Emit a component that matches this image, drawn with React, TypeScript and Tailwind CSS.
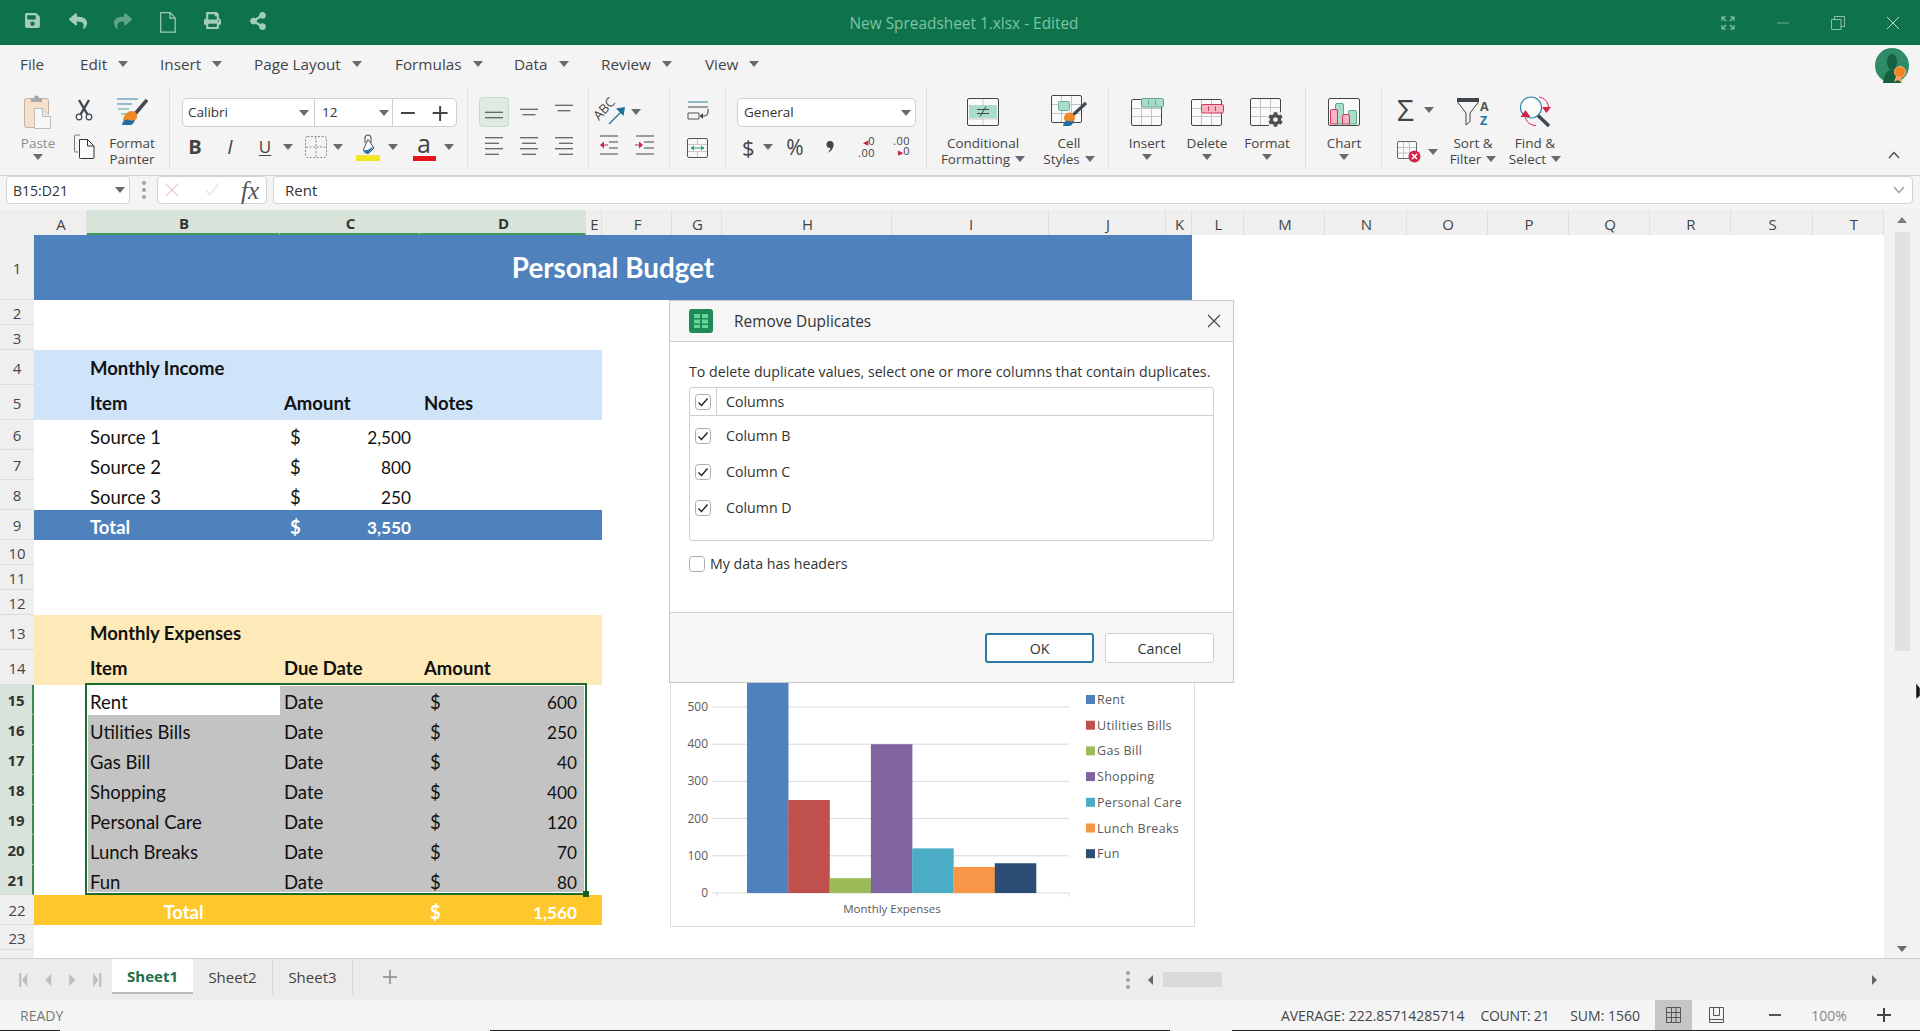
import type { ReactNode } from "react";
import { FaCog, FaPrint, FaReply, FaSave, FaShare, FaShareAlt } from "react-icons/fa";

const Caret = ({ className = "" }: { className?: string }) => (
  <svg width="10" height="6" viewBox="0 0 10 6" className={`shrink-0 ${className}`}>
    <path d="M0 0h10L5 6z" fill="#666b70" />
  </svg>
);

const GridLines = ({ d }: { d: string }) => <path d={d} stroke="#c4c4c4" strokeWidth="1" fill="none" />;

const Lines = ({ widths, align = "left", y = 0 }: { widths: number[]; align?: string; y?: number }) => (
  <svg width="20" height="20" viewBox="0 0 20 20" style={{ transform: `translateY(${y}px)` }}>
    {widths.map((w, i) => {
      const x = align === "left" ? 1 : align === "right" ? 19 - w : 10 - w / 2;
      const top = (20 - (widths.length - 1) * (widths.length === 3 ? 6 : 5.5)) / 2;
      return <path key={i} d={`M${x} ${top + i * (widths.length === 3 ? 6 : 5.5)}h${w}`} stroke="#4a4a4a" strokeWidth="1.1" />;
    })}
  </svg>
);

const PasteIcon = () => (
  <svg width="28" height="35" viewBox="0 0 28 35">
    <rect x="0.5" y="4.5" width="24" height="29" rx="2" fill="#f6e0cb" stroke="#c2b1a3" />
    <path d="M7 8V4h3a2.5 2.5 0 0 1 5 0h3v4z" fill="#a8a8a8" />
    <path d="M10.5 14.5h8l8 8v12h-16z" fill="#f7f7f7" stroke="#bdbdbd" />
    <path d="M18.5 14.5v8h8" fill="#e6e6e6" stroke="#bdbdbd" />
  </svg>
);

const ScissorsIcon = () => (
  <svg width="18" height="22" viewBox="0 0 18 22">
    <circle cx="4" cy="18" r="2.8" fill="none" stroke="#3e474d" strokeWidth="1.2" />
    <circle cx="14" cy="18" r="2.8" fill="none" stroke="#3e474d" strokeWidth="1.2" />
    <path d="M5.5 15.5 14 1M12.5 15.5 4 1" stroke="#3e474d" strokeWidth="2.4" />
  </svg>
);

const CopyIcon = () => (
  <svg width="22" height="25" viewBox="0 0 22 25">
    <path d="M7 1H2.5a1 1 0 0 0-1 1v15a1 1 0 0 0 1 1H5" fill="none" stroke="#777" />
    <path d="M6.5 5.5h8l6.5 6.5v11.5a1 1 0 0 1-1 1H7.5a1 1 0 0 1-1-1z" fill="#fafafa" stroke="#333" />
    <path d="M14.5 5.5V12H21" fill="none" stroke="#333" />
  </svg>
);

const PainterIcon = () => (
  <svg width="31" height="28" viewBox="0 0 31 28">
    <path d="M0 1h21" stroke="#4b96b6" strokeWidth="1.2" />
    <path d="M0 6h15" stroke="#4b96b6" strokeWidth="1.2" />
    <path d="M1 11h11" stroke="#63b5a2" strokeWidth="1.2" />
    <path d="M4 16h6" stroke="#63b5a2" strokeWidth="1.2" />
    <path d="M18 16 30 2" stroke="#414a50" strokeWidth="3.5" />
    <path d="M9 15.5c4-4 10-3 11 1.5.7 3-1 5-3 6H6c0-3 1-5 3-7.5z" fill="#ef8a27" />
    <path d="M5 27c.5-4 3-6 7-5 2 .5 4 1 6 0-1 3-3 5-5 5z" fill="#1f6ea6" />
  </svg>
);

const BordersIcon = () => (
  <svg width="22" height="22" viewBox="0 0 22 22">
    <rect x="0.5" y="0.5" width="21" height="21" rx="2" fill="none" stroke="#8a8a8a" strokeDasharray="2 1.5" />
    <path d="M11 1v20M1 11h20" stroke="#8a8a8a" strokeDasharray="2 1.5" />
  </svg>
);

const FillIcon = () => (
  <svg width="24" height="27" viewBox="0 0 24 27">
    <path d="M9 9V4a3 3 0 0 1 6 0v5" fill="none" stroke="#555" strokeWidth="1.1" />
    <path d="M12 5.5 18 14l-5 5-1 .5c-2.5 0-4.5-1.5-4.5-4z" fill="#fff" stroke="#555" />
    <path d="M8 16c2 .5 5 0 8-3l1 1-4.5 5c-2.5.7-4.5-.5-4.5-3z" fill="#1f78ab" />
    <rect x="0" y="21.5" width="24" height="5.5" fill="#f6e71c" stroke="#e2d43a" strokeWidth="0.5" />
  </svg>
);

const TextColorIcon = () => (
  <div className="flex w-[24px] flex-col items-center">
    <span className="text-[25px] leading-[21px] text-[#444]">a</span>
    <span className="mt-[2px] h-[5px] w-[23px] bg-[#e8141c]" />
  </div>
);

const AbcIcon = () => (
  <svg width="28" height="26" viewBox="0 0 28 26" className="overflow-visible">
    <text x="1" y="22" transform="rotate(-47 1 22)" fontFamily="Open Sans, sans-serif" fontSize="13" fill="#444">ABC</text>
    <path d="M11 25 24 12" stroke="#1f6f96" strokeWidth="1.2" />
    <path d="M18 9.5l9-1.500-1.500 9z" fill="#1f6f96" />
  </svg>
);

const IndentIcon = ({ flip = false }: { flip?: boolean }) => (
  <svg width="20" height="20" viewBox="0 0 20 20">
    {flip ? (
      <>
        <path d="M1 1h18M1 19h18M9 7h10M9 13h10" stroke="#444" strokeWidth="1.1" />
        <path d="M0 9.4h4V6.5l4 3.5-4 3.5v-2.9H0z" fill="#c5264d" />
      </>
    ) : (
      <>
        <path d="M1 1h18M1 19h18M10 7h9M10 13h9" stroke="#444" strokeWidth="1.1" />
        <path d="M9 9.4H5V6.5L1 10l4 3.5v-2.9h4z" fill="#c5264d" />
      </>
    )}
  </svg>
);

const WrapIcon = () => (
  <svg width="22" height="20" viewBox="0 0 22 20">
    <path d="M1 1h20" stroke="#4f8fb0" strokeWidth="1.2" />
    <path d="M1 6h20" stroke="#555" strokeWidth="1.1" />
    <path d="M1 12h11v6H1z" fill="none" stroke="#555" strokeWidth="1" />
    <path d="M21 8v3a4 4 0 0 1-4 4h-2" fill="none" stroke="#444" strokeWidth="1.1" />
    <path d="M16 12l-3.5 3 3.5 3z" fill="#444" />
  </svg>
);

const MergeIcon = () => (
  <svg width="21" height="20" viewBox="0 0 21 20">
    <rect x="0.5" y="0.5" width="20" height="19" rx="1.5" fill="#f8f8f8" stroke="#555" />
    <path d="M1 6.5h19M1 13.5h19M10.5 1v5.5M10.5 13.5V19" stroke="#c8c8c8" />
    <path d="M4 10h13" stroke="#35a27a" strokeWidth="1.1" />
    <path d="M7 7.5 3.5 10 7 12.5zM14 7.5l3.5 2.5-3.5 2.5z" fill="#35a27a" />
  </svg>
);

const CommaIcon = () => (
  <svg width="8" height="12" viewBox="0 0 8 12">
    <circle cx="4" cy="3.5" r="3.5" fill="#444" />
    <path d="M7.5 3.5c0 4-2.5 7-6 8.500 2-2 3-4 3-6z" fill="#444" />
  </svg>
);

const CfIcon = () => (
  <svg width="32" height="28" viewBox="0 0 32 28">
    <rect x="0.5" y="0.5" width="31" height="27" rx="1.5" fill="#fafafa" stroke="#444" />
    <path d="M16 1v26M1 21h30" stroke="#c8c8c8" />
    <rect x="2" y="7" width="28" height="13" fill="#a9dccb" />
    <path d="M10 11.5h12M10 15.5h12M19 8.5l-6 10" stroke="#444" strokeWidth="1" />
  </svg>
);

const CellStylesIcon = () => (
  <svg width="36" height="32" viewBox="0 0 36 32">
    <rect x="0.5" y="0.5" width="30" height="27" rx="1.5" fill="#fafafa" stroke="#444" />
    <GridLines d="M10.5 1v26M20.5 1v26M1 9.5h29M1 18.5h29" />
    <rect x="7.5" y="6.5" width="11" height="9" rx="1" fill="#a9dccb" stroke="#69b59c" />
    <path d="M22 20 35 8" stroke="#414a50" strokeWidth="3.2" />
    <circle cx="18.5" cy="23" r="5.5" fill="#ef8a27" />
    <path d="M12 31c.5-4 3-6 6-5 2 .5 3 .5 5 0-1 3-3 5-5 5z" fill="#1f6ea6" />
  </svg>
);

const InsertDeleteIcon = ({ kind }: { kind: "insert" | "delete" }) => {
  const top = kind === "insert" ? 0.5 : 6.5;
  const fill = kind === "insert" ? "#a9dccb" : "#f8b4c3";
  const stroke = kind === "insert" ? "#5fa98c" : "#c83a58";
  return (
    <svg width="33" height="28" viewBox="0 0 33 28">
      <rect x="0.5" y="1.5" width="30" height="26" rx="1.5" fill="#fafafa" stroke="#444" />
      <GridLines d="M10.5 2v25M20.5 2v25M1 10.5h29M1 18.5h29" />
      <rect x="10.5" y={top} width="22" height="8.5" rx="1.5" fill={fill} stroke={stroke} />
      <path d={`M17.5 ${top + 2}v4.5M24.5 ${top + 2}v4.5`} stroke={stroke} />
    </svg>
  );
};

const FormatIcon = () => (
  <svg width="34" height="29" viewBox="0 0 34 29">
    <rect x="0.5" y="0.5" width="30" height="27" rx="1.5" fill="#fafafa" stroke="#444" />
    <GridLines d="M10.5 1v26M20.5 1v26M1 9.5h29M1 18.5h29" />
    <circle cx="25.5" cy="21.5" r="9" fill="#f3f3f3" />
    <FaCog x="18" y="14" size="15" color="#4b4f53" />
  </svg>
);

const ChartIcon = () => (
  <svg width="32" height="28" viewBox="0 0 32 28">
    <rect x="0.5" y="0.5" width="31" height="27" rx="1.5" fill="#fafafa" stroke="#444" />
    <path d="M7.5 26V7A1.5 1.5 0 0 1 9 5.5h5A1.5 1.5 0 0 1 15.5 7v19z" fill="#a9dccb" stroke="#5fa98c" />
    <path d="M20.5 26V14a1.5 1.5 0 0 1 1.5-1.5h5a1.5 1.5 0 0 1 1.5 1.5v12z" fill="#a9dccb" stroke="#5fa98c" />
    <path d="M2.5 26V13A1.5 1.5 0 0 1 4 11.5h4A1.5 1.5 0 0 1 9.5 13v13z" fill="#f8b4c3" stroke="#c83a58" />
    <path d="M14.5 26v-8a1.5 1.5 0 0 1 1.5-1.5h4a1.5 1.5 0 0 1 1.5 1.5v8z" fill="#f8b4c3" stroke="#c83a58" />
  </svg>
);

const ClearIcon = () => (
  <svg width="24" height="22" viewBox="0 0 24 22">
    <rect x="0.5" y="0.5" width="19" height="17" rx="1.5" fill="#fafafa" stroke="#666" />
    <GridLines d="M6.5 1v16M12.5 1v16M1 6.5h18M1 12h18" />
    <circle cx="17.5" cy="15.5" r="6" fill="#d5244c" />
    <path d="M15 13l5 5M20 13l-5 5" stroke="#fff" strokeWidth="1.6" />
  </svg>
);

const SortIcon = () => (
  <svg width="33" height="28" viewBox="0 0 33 28" className="overflow-visible">
    <rect x="0" y="0" width="22" height="4" fill="#3f464b" />
    <path d="M.5 4 9 15v12l4-3.5V15l8.500-11" fill="none" stroke="#444" />
    <text x="23" y="13" fontFamily="Open Sans, sans-serif" fontWeight="700" fontSize="12.5" fill="#555">A</text>
    <text x="23" y="27" fontFamily="Open Sans, sans-serif" fontWeight="700" fontSize="12.5" fill="#1c77a5">Z</text>
  </svg>
);

const FindIcon = () => (
  <svg width="34" height="32" viewBox="0 0 34 32">
    <circle cx="13" cy="11.5" r="10.5" fill="#fbfbfb" stroke="#2f7fa5" strokeWidth="1.1" />
    <path d="M20 19.5 31 30" stroke="#3d4a52" strokeWidth="3.5" />
    <path d="M21 1c5 1 9 4 9.5 10" fill="none" stroke="#d5244c" />
    <path d="M24 11h9l-4.5 6z" fill="#d5244c" />
    <path d="M7 20c.5 5 5 9.5 11 9.5" fill="none" stroke="#d5244c" />
    <path d="M2.5 21 7.5 14l5 7z" fill="#d5244c" />
  </svg>
);

const Avatar = () => (
  <svg width="34" height="35" viewBox="0 0 34 35">
    <ellipse cx="17" cy="17.5" rx="17" ry="17.5" fill="#2f8a66" />
    <ellipse cx="17" cy="14" rx="5" ry="8" fill="#14603f" />
    <path d="M8 35c1-10 5-13 9-13s8 3 9 13z" fill="#14603f" />
    <path d="M21 28l-2 6 4-2 4 3-1-7z" fill="#f5a35c" />
    <circle cx="25" cy="24" r="5.5" fill="#f0851e" stroke="#f7b27a" />
  </svg>
);

const FileIcon = () => (
  <svg width="16" height="21" viewBox="0 0 16 21">
    <path d="M.7.7h9.5l5 5.5v14H.7z" fill="none" stroke="#a2cdb9" strokeWidth="1.2" />
    <path d="M10 .7v5.5h5.2" fill="none" stroke="#a2cdb9" strokeWidth="1.2" />
  </svg>
);

const Grip = () => (
  <svg width="4" height="18" viewBox="0 0 4 18">
    <circle cx="2" cy="2" r="2" fill="#a0a0a0" />
    <circle cx="2" cy="9" r="2" fill="#a0a0a0" />
    <circle cx="2" cy="16" r="2" fill="#a0a0a0" />
  </svg>
);

const TitleBar = () => (
  <div className="grid h-[45px] shrink-0 grid-cols-[1fr_auto_1fr] items-center bg-[#0e734b]">
    <div className="flex pl-[10px]">
      <span className="flex w-[45px] justify-center"><FaSave size={17} color="#a2cdb9" /></span>
      <span className="flex w-[45px] justify-center"><FaReply size={18} color="#a2cdb9" /></span>
      <span className="flex w-[45px] justify-center"><FaShare size={18} color="#5fa486" /></span>
      <span className="flex w-[45px] justify-center"><FileIcon /></span>
      <span className="flex w-[45px] justify-center"><FaPrint size={17} color="#a2cdb9" /></span>
      <span className="flex w-[45px] justify-center"><FaShareAlt size={18} color="#a2cdb9" /></span>
    </div>
    <div className="pl-[8px] pt-[3px] text-[15.4px] text-[#7dc3a3]">New Spreadsheet 1.xlsx - Edited</div>
    <div className="flex justify-end">
      <span className="flex w-[55px] justify-center">
        <svg width="14" height="14" viewBox="0 0 14 14" fill="none" stroke="#8dc2a9" strokeWidth="1.1">
          <path d="M1 5V1h4M1 1l4 4M13 5V1H9M13 1 9 5M1 9v4h4M1 13l4-4M13 9v4H9M13 13 9 9" />
        </svg>
      </span>
      <span className="flex w-[55px] justify-center">
        <svg width="14" height="14" viewBox="0 0 14 14"><path d="M1 7h12" stroke="#6cae90" /></svg>
      </span>
      <span className="flex w-[55px] justify-center">
        <svg width="14" height="14" viewBox="0 0 14 14" fill="none" stroke="#8dc2a9">
          <path d="M.5 3.5h9.5v10H.5zM3.5 3.5V.5h10v10H10" />
        </svg>
      </span>
      <span className="flex w-[55px] justify-center">
        <svg width="14" height="14" viewBox="0 0 14 14"><path d="M1 1l12 12M13 1 1 13" stroke="#bcdccc" strokeWidth="1" /></svg>
      </span>
    </div>
  </div>
);

const menus = [
  { label: "File", w: "w-[60px]", caret: false },
  { label: "Edit", w: "w-[80px]", caret: true },
  { label: "Insert", w: "w-[94px]", caret: true },
  { label: "Page Layout", w: "w-[141px]", caret: true },
  { label: "Formulas", w: "w-[119px]", caret: true },
  { label: "Data", w: "w-[87px]", caret: true },
  { label: "Review", w: "w-[104px]", caret: true },
  { label: "View", w: "w-[90px]", caret: true },
];

const MenuBar = () => (
  <div className="flex h-[40px] shrink-0 items-center justify-between bg-[#f4f4f4] pl-[20px] pr-[11px] text-[15.3px] text-[#444]">
    <div className="flex pb-[2px]">
      {menus.map((m) => (
        <div key={m.label} className={`flex items-center gap-[11px] ${m.w}`}>
          <span>{m.label}</span>
          {m.caret && <Caret />}
        </div>
      ))}
    </div>
    <Avatar />
  </div>
);

const Group = ({ w, children }: { w: string; children: ReactNode }) => (
  <div className={`relative h-full shrink-0 ${w}`}>
    {children}
    <div className="absolute bottom-[7px] right-0 top-[3px] w-px bg-[#e2e2e2]" />
  </div>
);

const Big = ({ w, icon, top = "h-[41px]", gap = "mt-[9px]", lines, caret = "below", muted }: { w: string; icon: ReactNode; top?: string; gap?: string; lines: string[]; caret?: "below" | "inline" | "none"; muted?: boolean }) => (
  <div className={`flex shrink-0 flex-col items-center ${w}`}>
    <div className={`flex items-end justify-center ${top}`}>{icon}</div>
    <div className={`flex flex-col items-center text-[13.5px] leading-[16px] ${gap} ${muted ? "text-[#8e8e8e]" : "text-[#444]"}`}>
      {lines.map((l, i) => (
        <div key={l} className="flex items-center gap-[5px] whitespace-nowrap">
          {l}
          {caret === "inline" && i === lines.length - 1 && <Caret />}
        </div>
      ))}
      {caret === "below" && <Caret className="mt-[3px]" />}
    </div>
  </div>
);

const Ribbon = () => (
  <div className="relative flex h-[91px] shrink-0 border-b border-[#d2d2d2] bg-[#f4f4f4]">
    <Group w="w-[170px]">
      <div className="flex pl-[2px]">
        <Big w="w-[72px]" icon={<PasteIcon />} top="h-[44px]" gap="mt-[6px]" lines={["Paste"]} muted />
        <div className="flex w-[20px] flex-col items-center pt-[14px]">
          <ScissorsIcon />
          <div className="mt-[13px]"><CopyIcon /></div>
        </div>
        <Big w="w-[76px]" icon={<PainterIcon />} lines={["Format", "Painter"]} caret="none" />
      </div>
    </Group>

    <Group w="w-[298px]">
      <div className="pl-[12px] pt-[13px]">
        <div className="flex h-[29px] w-[275px] items-center rounded-[5px] border border-[#cfcfcf] bg-white text-[13.5px] text-[#333]">
          <div className="flex h-full w-[133px] items-center justify-between border-r border-[#cfcfcf] pl-[5px] pr-[5px]">
            Calibri <Caret />
          </div>
          <div className="flex h-full w-[78px] items-center justify-between border-r border-[#cfcfcf] pl-[7px] pr-[3px]">
            12 <Caret />
          </div>
          <svg width="64" height="18" viewBox="0 0 64 18" stroke="#444" strokeWidth="2">
            <path d="M8 9h14M40 9h15M47.5 2v15" />
          </svg>
        </div>
        <div className="mt-[7px] flex h-[26px] items-center text-[#444]">
          <span className="ml-[6px] w-[14px] text-center text-[20px] font-bold">B</span>
          <span className="ml-[21px] w-[14px] text-center text-[20px] italic">I</span>
          <span className="ml-[21px] w-[14px] text-center text-[17px] underline underline-offset-[2px]">U</span>
          <Caret className="ml-[11px]" />
          <span className="ml-[12px]"><BordersIcon /></span>
          <Caret className="ml-[6px]" />
          <span className="ml-[13px]"><FillIcon /></span>
          <Caret className="ml-[8px]" />
          <span className="ml-[14px]"><TextColorIcon /></span>
          <Caret className="ml-[8px]" />
        </div>
      </div>
    </Group>

    <Group w="w-[121px]">
      <div className="grid grid-cols-[repeat(3,35px)] grid-rows-[30px_38px] justify-items-center pl-[8px] pt-[12px]">
        <div className="flex h-[30px] w-[30px] items-center justify-center rounded-[4px] border border-[#c8dacf] bg-[#dfeae3]">
          <Lines widths={[18, 18]} align="left" y={3} />
        </div>
        <div className="flex h-[30px] items-center"><Lines widths={[18, 13]} align="center" y={0} /></div>
        <div className="flex h-[30px] items-center"><Lines widths={[18, 13]} align="center" y={-4} /></div>
        <div className="flex items-center"><Lines widths={[18, 14, 18, 14]} /></div>
        <div className="flex items-center"><Lines widths={[18, 14, 18, 14]} align="center" /></div>
        <div className="flex items-center"><Lines widths={[18, 14, 18, 14]} align="right" /></div>
      </div>
    </Group>

    <Group w="w-[81px]">
      <div className="flex items-center pl-[9px] pt-[14px]">
        <AbcIcon />
        <Caret className="ml-[5px]" />
      </div>
      <div className="mt-[10px] flex items-center pl-[10px]">
        <IndentIcon />
        <span className="ml-[16px]"><IndentIcon flip /></span>
      </div>
    </Group>

    <Group w="w-[56px]">
      <div className="flex flex-col items-center pr-px pt-[16px]">
        <WrapIcon />
        <div className="mt-[17px]"><MergeIcon /></div>
      </div>
    </Group>

    <Group w="w-[201px]">
      <div className="pl-[11px] pt-[13px]">
        <div className="flex h-[29px] w-[179px] items-center justify-between rounded-[5px] border border-[#cfcfcf] bg-white pl-[6px] pr-[4px] text-[13.5px] text-[#333]">
          General <Caret />
        </div>
        <div className="mt-[6px] flex h-[28px] items-center text-[#444]">
          <span className="ml-[5px] w-[12px] text-center text-[22px] leading-none">$</span>
          <Caret className="ml-[9px]" />
          <span className="ml-[12px] w-[20px] text-center text-[21px] leading-none">%</span>
          <span className="ml-[21px]"><CommaIcon /></span>
          <div className="ml-[21px] flex w-[20px] flex-col items-end text-[11px] leading-[10px] tracking-[0.5px]">
            <span><span className="text-[7px] text-[#c5264d]">◀</span>0</span>
            <span>.00</span>
          </div>
          <div className="ml-[15px] flex w-[20px] flex-col items-end text-[11px] leading-[10px] tracking-[0.5px]">
            <span>.00</span>
            <span><span className="text-[7px] text-[#c5264d]">▶</span>0</span>
          </div>
        </div>
      </div>
    </Group>

    <Group w="w-[182px]">
      <div className="flex">
        <Big w="w-[112px]" icon={<CfIcon />} lines={["Conditional", "Formatting"]} caret="inline" />
        <Big w="w-[60px]" icon={<CellStylesIcon />} top="h-[42px]" gap="mt-[8px]" lines={["Cell", "Styles"]} caret="inline" />
      </div>
    </Group>

    <Group w="w-[197px]">
      <div className="flex pl-[8px]">
        <Big w="w-[60px]" icon={<InsertDeleteIcon kind="insert" />} lines={["Insert"]} />
        <Big w="w-[60px]" icon={<InsertDeleteIcon kind="delete" />} lines={["Delete"]} />
        <Big w="w-[60px]" icon={<FormatIcon />} top="h-[42px]" gap="mt-[8px]" lines={["Format"]} />
      </div>
    </Group>

    <Group w="w-[76px]">
      <Big w="w-[76px]" icon={<ChartIcon />} lines={["Chart"]} />
    </Group>

    <div className="flex flex-1">
      <div className="flex w-[63px] shrink-0 flex-col pl-[15px]">
        <div className="flex items-center pt-[8px] text-[30px] leading-[34px] text-[#444]">
          Σ<Caret className="ml-[10px]" />
        </div>
        <div className="mt-[14px] flex items-center">
          <ClearIcon />
          <Caret className="ml-[7px]" />
        </div>
      </div>
      <Big w="w-[56px]" icon={<SortIcon />} lines={["Sort &", "Filter"]} caret="inline" />
      <Big w="w-[68px]" icon={<FindIcon />} top="h-[43px]" gap="mt-[7px]" lines={["Find &", "Select"]} caret="inline" />
      <div className="ml-auto flex items-end pb-[16px] pr-[20px]">
        <svg width="12" height="8" viewBox="0 0 12 8" fill="none" stroke="#444" strokeWidth="1.2"><path d="M1 7l5-5.5L11 7" /></svg>
      </div>
    </div>
  </div>
);

const FormulaBar = () => (
  <div className="flex h-[34px] shrink-0 bg-[#f4f4f4] pl-[6px] pr-[7px]">
    <div className="flex h-[28px] w-[124px] items-center justify-between rounded-[4px] border border-[#d2d2d2] bg-white pl-[6px] pr-[4px] text-[14px] text-[#333]">
      B15:D21 <Caret />
    </div>
    <div className="flex h-[28px] w-[27px] items-center justify-center"><Grip /></div>
    <div className="flex h-[28px] w-[110px] items-center rounded-[4px] border border-[#d2d2d2] bg-white">
      <svg width="14" height="14" viewBox="0 0 14 14" className="ml-[7px]"><path d="M1 1l12 12M13 1 1 13" stroke="#f0cbd2" strokeWidth="1.4" /></svg>
      <svg width="14" height="14" viewBox="0 0 14 14" className="ml-[26px]"><path d="M1 7l4 5L13 1" fill="none" stroke="#d7ece3" strokeWidth="1.4" /></svg>
      <span className="ml-[22px] font-['Liberation_Serif',serif] text-[25px] italic leading-none text-[#555]">fx</span>
    </div>
    <div className="ml-[6px] flex h-[28px] flex-1 items-center justify-between rounded-[4px] border border-[#d2d2d2] bg-white pl-[11px] pr-[7px] text-[15px] text-[#333]">
      Rent
      <svg width="12" height="8" viewBox="0 0 12 8" fill="none" stroke="#999" strokeWidth="1.2"><path d="M1 1l5 5.5L11 1" /></svg>
    </div>
  </div>
);

const columns = [
  { l: "A", w: "w-[53px]" },
  { l: "B", w: "w-[193px]", s: true },
  { l: "C", w: "w-[140px]", s: true },
  { l: "D", w: "w-[166px]", s: true },
  { l: "E", w: "w-[16px]" },
  { l: "F", w: "w-[70px]" },
  { l: "G", w: "w-[50px]" },
  { l: "H", w: "w-[170px]" },
  { l: "I", w: "w-[157px]" },
  { l: "J", w: "w-[117px]" },
  { l: "K", w: "w-[26px]" },
  { l: "L", w: "w-[52px]" },
  { l: "M", w: "w-[81px]" },
  { l: "N", w: "w-[82px]" },
  { l: "O", w: "w-[81px]" },
  { l: "P", w: "w-[81px]" },
  { l: "Q", w: "w-[81px]" },
  { l: "R", w: "w-[81px]" },
  { l: "S", w: "w-[82px]" },
  { l: "T", w: "w-[71px] pl-[12px]" },
];

const ColumnHeader = () => (
  <div className="flex h-[25px] shrink-0 bg-[#efefef] pl-[34px] text-[15px] text-[#444]">
    {columns.map((c) => (
      <div
        key={c.l}
        className={`flex items-center justify-center border-r border-[#dfdfdf] pl-[2px] pt-[3px] ${c.w} ${
          c.s ? "border-b-2 border-b-[#3e9a5c] bg-[#d8e4da] font-bold text-[#333]" : ""
        }`}
      >
        {c.l}
      </div>
    ))}
  </div>
);

const RowHead = ({ n, h, sel }: { n: number; h: string; sel?: boolean }) => (
  <div
    className={`flex w-[34px] shrink-0 items-center justify-center border-b border-[#dcdcdc] pt-[2px] text-[15px] ${h} ${
      sel ? "border-r-2 border-r-[#3e8a55] bg-[#d8e4da] font-bold text-[#333]" : "bg-[#efefef] text-[#444]"
    }`}
  >
    {n}
  </div>
);

const Money = ({ w, v }: { w: string; v: string }) => (
  <div className={`flex items-baseline justify-between pl-[10px] pr-[9px] ${w}`}>
    <span>$</span>
    <span className="text-[17.2px]">{v}</span>
  </div>
);

const Row = ({ n, h, sel, band = "", children }: { n: number; h: string; sel?: boolean; band?: string; children?: ReactNode }) => (
  <div className={`flex shrink-0 ${h}`}>
    <RowHead n={n} h={h} sel={sel} />
    <div className={`flex w-[568px] items-center font-['Lato',sans-serif] text-[18.5px] text-[#111] ${band}`}>
      <div className="w-[53px] shrink-0" />
      {children}
    </div>
  </div>
);

const expenses = [
  { item: "Rent", amt: "600" },
  { item: "Utilities Bills", amt: "250" },
  { item: "Gas Bill", amt: "40" },
  { item: "Shopping", amt: "400" },
  { item: "Personal Care", amt: "120" },
  { item: "Lunch Breaks", amt: "70" },
  { item: "Fun", amt: "80" },
];

const income = [
  { item: "Source 1", amt: "2,500" },
  { item: "Source 2", amt: "800" },
  { item: "Source 3", amt: "250" },
];

const Sheet = () => (
  <div className="relative flex-1 overflow-hidden bg-white">
    <div className="flex h-[65px]">
      <RowHead n={1} h="h-[65px]" />
      <div className="flex w-[1158px] items-center justify-center bg-[#4f81bd] font-['Lato',sans-serif] text-[27.8px] font-bold text-white">
        Personal Budget
      </div>
    </div>
    <Row n={2} h="h-[25px]" />
    <Row n={3} h="h-[25px]" />
    <Row n={4} h="h-[35px]" band="bg-[#cfe3f9] pt-[2px] font-bold">
      <div className="pl-[3px]">Monthly Income</div>
    </Row>
    <Row n={5} h="h-[35px]" band="bg-[#cfe3f9] pt-[2px] font-bold">
      <div className="w-[193px] pl-[3px]">Item</div>
      <div className="w-[140px] pl-[4px]">Amount</div>
      <div className="pl-[4px]">Notes</div>
    </Row>
    {income.map((r, i) => (
      <Row key={r.item} n={6 + i} h="h-[30px]" band="pt-[5px]">
        <div className="w-[193px] pl-[3px]">{r.item}</div>
        <Money w="w-[140px]" v={r.amt} />
      </Row>
    ))}
    <Row n={9} h="h-[30px]" band="bg-[#4f81bd] pt-[5px] font-bold">
      <div className="w-[193px] pl-[3px] text-white">Total</div>
      <div className="text-white"><Money w="w-[140px]" v="3,550" /></div>
    </Row>
    <Row n={10} h="h-[25px]" />
    <Row n={11} h="h-[25px]" />
    <Row n={12} h="h-[25px]" />
    <Row n={13} h="h-[35px]" band="bg-[#fdeab8] pt-[2px] font-bold">
      <div className="pl-[3px]">Monthly Expenses</div>
    </Row>
    <Row n={14} h="h-[35px]" band="bg-[#fdeab8] pt-[2px] font-bold">
      <div className="w-[193px] pl-[3px]">Item</div>
      <div className="w-[140px] pl-[4px]">Due Date</div>
      <div className="pl-[4px]">Amount</div>
    </Row>
    {expenses.map((r, i) => (
      <div key={r.item} className="flex h-[30px] shrink-0">
        <RowHead n={15 + i} h="h-[30px]" sel />
        <div className="flex h-full w-[568px] items-center font-['Lato',sans-serif] text-[18.5px] text-[#111]">
          <div className="w-[53px] shrink-0" />
          <div className={`flex h-full w-[193px] items-center pl-[3px] pt-[5px] ${i === 0 ? "bg-white" : "bg-[#c3c3c3]"}`}>{r.item}</div>
          <div className="flex h-full w-[306px] items-center bg-[#c3c3c3] pt-[5px]">
            <div className="w-[140px] pl-[4px]">Date</div>
            <Money w="w-[166px]" v={r.amt} />
          </div>
        </div>
      </div>
    ))}
    <Row n={22} h="h-[30px]" band="bg-[#fec82c] pt-[5px] font-bold">
      <div className="w-[193px] text-center text-white">Total</div>
      <div className="w-[140px]" />
      <div className="text-white"><Money w="w-[166px]" v="1,560" /></div>
    </Row>
    <Row n={23} h="h-[25px]" />
    <Row n={24} h="h-[25px]" />

    <div className="pointer-events-none absolute left-[85px] top-[448px] h-[212px] w-[502px] border-2 border-[#1c6b2c] shadow-[inset_0_0_0_1px_#fff]">
      <div className="absolute -bottom-[4px] -right-[4px] h-[6px] w-[6px] bg-[#10601f]" />
    </div>
  </div>
);

const Scrollbar = () => (
  <div className="flex w-[36px] shrink-0 flex-col items-center bg-[#f2f2f2] pb-[6px] pt-[7px]">
    <svg width="10" height="6" viewBox="0 0 10 6"><path d="M5 0l5 6H0z" fill="#7d7d7d" /></svg>
    <div className="mt-[9px] h-[419px] w-[15px] bg-[#e2e2e2]" />
    <div className="flex-1" />
    <Caret />
  </div>
);

const chartBars = [
  { name: "Rent", v: 600, c: "#4f81bd" },
  { name: "Utilities Bills", v: 250, c: "#c0504d" },
  { name: "Gas Bill", v: 40, c: "#9bbb59" },
  { name: "Shopping", v: 400, c: "#8064a2" },
  { name: "Personal Care", v: 120, c: "#4bacc6" },
  { name: "Lunch Breaks", v: 70, c: "#f79646" },
  { name: "Fun", v: 80, c: "#2c4d75" },
];

const Chart = () => (
  <div className="absolute left-[670px] top-[560px] h-[367px] w-[525px] border border-[#dedede] bg-white">
    <svg width="525" height="367" viewBox="670 560 525 367" fontFamily="Open Sans, sans-serif" fontSize="12" fill="#595959">
      {[0, 100, 200, 300, 400, 500].map((t) => {
        const y = 892 - t * 0.372;
        return (
          <g key={t}>
            <path d={`M711 ${y}H1068`} stroke="#d9d9d9" />
            <text x="707" y={y + 4} textAnchor="end">{t}</text>
          </g>
        );
      })}
      <path d="M716 892v4M1068 892v4" stroke="#d9d9d9" />
      {chartBars.map((b, i) => (
        <rect key={b.name} x={746 + i * 41.3} y={892 - b.v * 0.372} width={41.5} height={b.v * 0.372} fill={b.c} />
      ))}
      <text x="891" y="912" textAnchor="middle" fontSize="11.5">Monthly Expenses</text>
      {chartBars.map((b, i) => {
        const y = 699 + i * 25.7;
        return (
          <g key={b.name}>
            <rect x="1085" y={y - 5} width="9" height="9" fill={b.c} />
            <text x="1096" y={y + 4} fontSize="12.5" letterSpacing="0.3">{b.name}</text>
          </g>
        );
      })}
    </svg>
  </div>
);

const Check = ({ on = true, className = "" }: { on?: boolean; className?: string }) => (
  <svg width="16" height="16" viewBox="0 0 16 16" className={`shrink-0 ${className}`}>
    <rect x="0.5" y="0.5" width="15" height="15" rx="3" fill="#fff" stroke="#adadad" />
    {on && <path d="M3.5 8.5 6.5 11.5 12.5 4.5" fill="none" stroke="#222" strokeWidth="1.4" />}
  </svg>
);

const Dialog = () => (
  <div className="absolute left-[669px] top-[300px] flex h-[383px] w-[565px] flex-col border border-[#c9c9c9] bg-white text-[14.2px] text-[#333]">
    <div className="flex h-[41px] shrink-0 items-center border-b border-[#d0d0d0] bg-[#f6f6f6] pl-[19px] pr-[12px]">
      <svg width="24" height="24" viewBox="0 0 24 24">
        <rect width="24" height="24" rx="3" fill="#1f8a58" />
        <path d="M5 5h6v4H5zM13 5h6v4h-6zM5 10.5h6v4H5zM13 10.5h6v4h-6zM5 16h6v3H5zM13 16h6v3h-6z" fill="#63d698" />
      </svg>
      <span className="ml-[21px] pt-[1px] text-[15.4px]">Remove Duplicates</span>
      <svg width="14" height="14" viewBox="0 0 14 14" className="ml-auto"><path d="M1 1l12 12M13 1 1 13" stroke="#444" strokeWidth="1.1" /></svg>
    </div>
    <div className="flex-1 px-[19px]">
      <p className="mt-[21px] whitespace-nowrap leading-[18px]">To delete duplicate values, select one or more columns that contain duplicates.</p>
      <div className="mt-[6px] h-[154px] w-[525px] rounded-[3px] border border-[#d0d0d0]">
        <div className="flex h-[28px] items-center border-b border-[#d0d0d0]">
          <div className="flex h-full w-[27px] items-center justify-center border-r border-[#d0d0d0]"><Check /></div>
          <span className="ml-[9px]">Columns</span>
        </div>
        <div className="pt-[2px]">
          {["Column B", "Column C", "Column D"].map((c) => (
            <div key={c} className="flex h-[36px] items-center pl-[5px]">
              <Check />
              <span className="ml-[15px]">{c}</span>
            </div>
          ))}
        </div>
      </div>
      <div className="mt-[12px] flex items-center">
        <Check on={false} />
        <span className="ml-[5px]">My data has headers</span>
      </div>
    </div>
    <div className="flex h-[70px] shrink-0 items-start justify-end gap-[11px] border-t border-[#d0d0d0] bg-[#f6f6f6] pr-[19px] pt-[20px]">
      <button className="h-[30px] w-[109px] rounded-[3px] border-2 border-[#2a78a8] bg-white pt-[2px] text-[14.2px]">OK</button>
      <button className="h-[30px] w-[109px] rounded-[3px] border border-[#d0d0d0] bg-white pt-[2px] text-[14.2px]">Cancel</button>
    </div>
  </div>
);

const NavArrow = ({ d }: { d: string }) => (
  <svg width="10" height="14" viewBox="0 0 10 14" className="w-[24.5px]"><path d={d} fill="#bdbdbd" /></svg>
);

const TabBar = () => (
  <div className="flex h-[42px] shrink-0 border-t border-[#cfcfcf] bg-[#ececec] text-[15px] text-[#444]">
    <div className="flex w-[112px] items-center pl-[11px]">
      <NavArrow d="M1 0h2v14H1zM9 0v14L4 7z" />
      <NavArrow d="M8 1v12L2 7z" />
      <NavArrow d="M2 1v12l6-6z" />
      <NavArrow d="M1 0v14l5-7zM7 0h2v14H7z" />
    </div>
    <div className="flex h-[35px] w-[81px] items-center justify-center border-b-2 border-[#bbb] bg-white pt-[2px] font-bold text-[#1e6e4a]">Sheet1</div>
    <div className="flex h-[35px] w-[80px] items-center justify-center border-r border-[#d5d5d5] pt-[2px]">Sheet2</div>
    <div className="flex h-[35px] w-[80px] items-center justify-center border-r border-[#d5d5d5] pt-[2px]">Sheet3</div>
    <div className="flex w-[73px] items-center justify-center pb-[6px]">
      <svg width="14" height="14" viewBox="0 0 14 14"><path d="M7 0v14M0 7h14" stroke="#888" strokeWidth="1.5" /></svg>
    </div>
    <div className="ml-[700px] flex flex-1 items-center">
      <Grip />
      <svg width="5" height="10" viewBox="0 0 5 10" className="ml-[18px]"><path d="M5 0v10L0 5z" fill="#666" /></svg>
      <div className="ml-[10px] h-[15px] w-[59px] bg-[#d9d9d9]" />
      <div className="flex-1" />
      <svg width="5" height="10" viewBox="0 0 5 10" className="mr-[43px]"><path d="M0 0v10l5-5z" fill="#666" /></svg>
    </div>
  </div>
);

const StatusBar = () => (
  <div className="flex h-[31px] shrink-0 flex-col bg-[#f4f4f4]">
    <div className="flex flex-1 items-center pl-[20px] text-[14px] text-[#444]">
      <span className="text-[#777]">READY</span>
      <span className="ml-auto whitespace-nowrap">AVERAGE: 222.85714285714</span>
      <span className="ml-[16px] tracking-[-0.3px]">COUNT: 21</span>
      <span className="ml-[21px]">SUM: 1560</span>
      <div className="ml-[15px] flex h-full w-[37px] items-center justify-center bg-[#c6c6c6]">
        <svg width="15" height="16" viewBox="0 0 15 16" fill="none" stroke="#555"><path d="M.5.5h14v15H.5zM5.5.5v15M10 .5v15M.5 5.5h14M.5 10.5h14" /></svg>
      </div>
      <svg width="15" height="16" viewBox="0 0 15 16" fill="none" stroke="#555" className="ml-[17px]"><path d="M.5 12.5V15.5h14v-3zM.5 12.5V.5M14.5 12.5V.5M4.500.5v8h6v-8zM.5.5h14" /></svg>
      <svg width="12" height="2" viewBox="0 0 12 2" className="ml-[45px]"><path d="M0 1h12" stroke="#555" strokeWidth="2" /></svg>
      <span className="w-[96px] text-center text-[#888]">100%</span>
      <svg width="14" height="14" viewBox="0 0 14 14" className="mr-[29px]"><path d="M7 0v14M0 7h14" stroke="#444" strokeWidth="2" /></svg>
    </div>
    <div className="flex h-px">
      <div className="w-[60px] bg-[#222]" />
      <div className="w-[430px]" />
      <div className="w-[680px] bg-[#222]" />
      <div className="w-[62px]" />
      <div className="flex-1 bg-[#222]" />
    </div>
  </div>
);

export default function App() {
  return (
    <div className="relative flex h-[1031px] w-[1920px] flex-col overflow-hidden bg-[#f4f4f4] font-['Open_Sans',sans-serif]">
      <TitleBar />
      <MenuBar />
      <Ribbon />
      <FormulaBar />
      <div className="flex min-h-0 flex-1">
        <div className="flex w-[1884px] flex-col">
          <ColumnHeader />
          <Sheet />
        </div>
        <Scrollbar />
      </div>
      <TabBar />
      <StatusBar />
      <Chart />
      <Dialog />
      <svg width="4" height="18" viewBox="0 0 4 18" className="absolute left-[1916px] top-[683px]">
        <path d="M0 0v16l4-3V5z" fill="#111" stroke="#fff" strokeWidth="0.5" />
      </svg>
    </div>
  );
}
